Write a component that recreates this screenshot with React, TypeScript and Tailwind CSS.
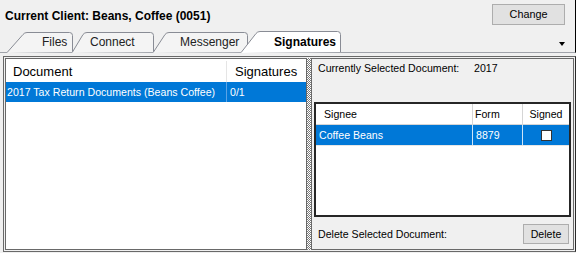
import React from 'react'

type TabProps = { label: string; width: number; textLeft: number; slant: number; selected?: boolean; className?: string }

function Tab({ label, width, textLeft, slant, selected, className }: TabProps) {
  const h = selected ? 21 : 20
  const s = slant
  const outline = `M0.5 ${h} L${s} 2.5 Q${s + 1.5} 0.5 ${s + 4} 0.5 L${width - 3.5} 0.5 Q${width - 0.5} 0.5 ${width - 0.5} 3.5 L${width - 0.5} ${h}`
  return (
    <div
      className={`relative flex items-center shrink-0 ${selected ? 'z-10 -mb-px h-[22px]' : 'h-[20px]'} ${className ?? ''}`}
      style={{ width }}
    >
      <svg className="absolute inset-0" width={width} height={h + 1} aria-hidden="true">
        <path d={`${outline} L0.5 ${h + 1} Z`} fill={selected ? '#ffffff' : '#f4f4f4'} />
        <path d={outline} fill="none" stroke="#898c95" />
      </svg>
      <span
        className={`relative text-[12px] leading-[14px] ${selected ? 'font-bold text-black' : 'text-[#222]'}`}
        style={{ paddingLeft: textLeft }}
      >
        {label}
      </span>
    </div>
  )
}

export default function App() {
  return (
    <div className="w-[576px] h-[253px] bg-[#f0f0f0] overflow-hidden flex flex-col font-['Liberation_Sans',Arial,sans-serif] text-black">
      {/* current client bar */}
      <div className="h-[31px] shrink-0 flex items-start justify-between pl-[5px] pr-[10px] border-r border-black">
        <span className="mt-[9px] font-bold text-[12px] leading-[14px]">Current Client: Beans, Coffee (0051)</span>
        <button className="mt-[4px] w-[73px] h-[21px] bg-[#e1e1e1] border border-[#adadad] text-[10.8px] leading-none">
          Change
        </button>
      </div>

      {/* tabs */}
      <div className="relative h-[22px] shrink-0 flex items-end pl-[7px] border-b border-[#a0a3aa] border-r border-r-black">
        <Tab label="Files" width={66} textLeft={35} slant={16} />
        <Tab label="Connect" width={82} textLeft={18} slant={11} className="-ml-px" />
        <Tab label="Messenger" width={95} textLeft={27} slant={12} className="-ml-px" />
        <Tab label="Signatures" width={100} textLeft={33} slant={15} selected className="-ml-[7px]" />
        <div className="absolute right-[10px] top-[11px] w-0 h-0 border-l-[3.5px] border-r-[3.5px] border-t-[4px] border-l-transparent border-r-transparent border-t-black" />
      </div>

      {/* content */}
      <div className="flex-1 pt-[3px] pl-[3px] pb-[1px]">
        <div className="h-full w-[573px] border border-[#696969] border-r-[#2a2a2a] p-px flex">
          {/* document list */}
          <div className="w-[302px] shrink-0 border border-[#696969] bg-white text-[10.6px]">
            <div className="h-[23px] flex items-center pt-[2px] text-[13px] leading-[15px]">
              <div className="w-[221px] pl-[7px] border-r border-[#e5e5e5] h-full flex items-center">Document</div>
              <div className="pl-[8px]">Signatures</div>
            </div>
            <div className="h-[20px] flex items-center bg-[#0078d7] text-white leading-[13px]">
              <div className="w-[221px] pl-[1px] border-r border-[#5aa3e6] h-full flex items-center">
                2017 Tax Return Documents (Beans Coffee)
              </div>
              <div className="pl-[3px]">0/1</div>
            </div>
          </div>

          {/* splitter */}
          <div className="w-[4px] shrink-0 bg-[repeating-conic-gradient(#7a7a7a_0%_25%,#ffffff_0%_50%)] bg-[length:2px_2px]" />

          {/* signature details */}
          <div className="flex-1 border border-[#696969] bg-[#f0f0f0] flex flex-col text-[10.6px] leading-[13px]">
            <div className="mt-[3px] pl-[6px] flex">
              <span className="w-[156px]">Currently Selected Document:</span>
              <span>2017</span>
            </div>

            <div className="mt-[27px] mx-[2px] h-[115px] border-2 border-[#262626] bg-white">
              <div className="h-[21px] flex border-b border-[#d5d5d5]">
                <div className="w-[157px] pl-[8px] flex items-center border-r border-[#d5d5d5]">Signee</div>
                <div className="w-[50px] pl-[2px] flex items-center border-r border-[#d5d5d5]">Form</div>
                <div className="flex-1 flex items-center justify-center">Signed</div>
              </div>
              <div className="h-[21px] flex bg-[#0078d7] text-white border-b border-[#e6e6e6]">
                <div className="w-[157px] pl-[3px] flex items-center border-r border-[#cfe4f7]">Coffee Beans</div>
                <div className="w-[50px] pl-[3px] flex items-center border-r border-[#cfe4f7]">8879</div>
                <div className="flex-1 flex items-center justify-center">
                  <div className="w-[11px] h-[11px] bg-white border border-[#333]" />
                </div>
              </div>
            </div>

            <div className="mt-[7px] pl-[6px] pr-[4px] flex items-center justify-between">
              <span>Delete Selected Document:</span>
              <button className="w-[46px] h-[20px] bg-[#e1e1e1] border border-[#adadad] leading-none">Delete</button>
            </div>
          </div>
        </div>
      </div>
    </div>
  )
}
